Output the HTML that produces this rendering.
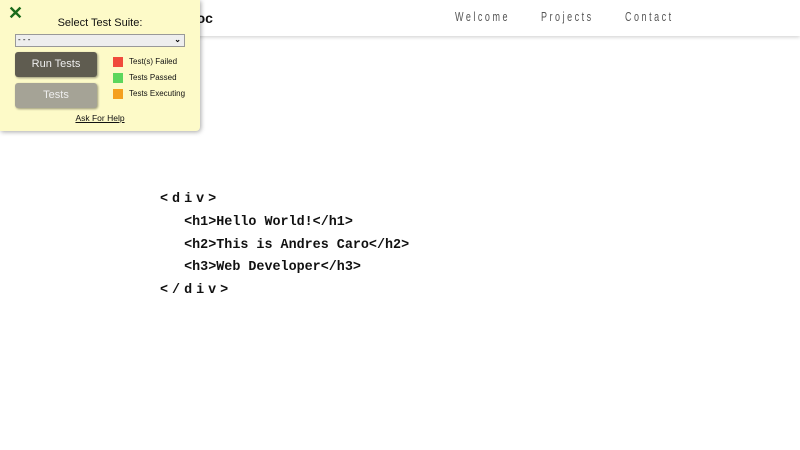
<!DOCTYPE html>
<html><head><meta charset="utf-8"><style>
body{margin:0;width:800px;height:450px;background:#fff;position:relative;overflow:hidden;font-family:"Liberation Sans",sans-serif}
.hdr{position:absolute;left:0;top:0;width:800px;height:36px;background:#fff;box-shadow:0 1px 4px rgba(0,0,0,.2)}
.logo{position:absolute;left:116px;top:10px;font-size:14px;font-weight:bold;color:#111}
.nav{position:absolute;top:10px;font-size:12.5px;color:#555;letter-spacing:3.5px;transform:scaleX(0.72);transform-origin:0 0}
.panel{position:absolute;left:0;top:0;width:200px;height:131px;background:#fdfac8;box-shadow:1px 1px 5px rgba(0,0,0,.35);border-radius:0 0 4px 0}
.x{position:absolute;left:8px;top:3px;font-size:18px;font-weight:bold;color:#1a6a1a}
.lbl{position:absolute;left:0;width:200px;top:17px;text-align:center;font-size:11px;color:#111}
.sel{position:absolute;left:15px;top:34px;width:166px;height:11px;border:1px solid #999;background:#eee;font-size:8px;line-height:10px;padding-left:2px;box-sizing:content-box}
.btn{position:absolute;left:15px;width:82px;height:25px;border-radius:3px;box-shadow:1px 1px 2px rgba(0,0,0,.4);color:#eee;font-size:11px;text-align:center;line-height:25px}
.lg{position:absolute;left:113px;font-size:8px;color:#111}
.lg i{display:inline-block;width:10px;height:10px;vertical-align:middle;margin-right:6px}
.help{position:absolute;left:0;width:200px;top:113px;text-align:center;font-size:8.5px;text-decoration:underline;color:#111}
.code{position:absolute;left:160px;top:189px;font-family:"Liberation Mono",monospace;font-weight:bold;font-size:13.4px;line-height:22.8px;color:#111}
.code div{white-space:pre}
.sp{letter-spacing:4px}
</style></head><body>
<div class="hdr">
<div class="logo"><span style="color:#ccc">@andrescar</span>oc</div>
<div class="nav" style="left:455px">Welcome</div>
<div class="nav" style="left:541px">Projects</div>
<div class="nav" style="left:625px">Contact</div>
</div>
<div class="panel">
<div class="x">✕</div>
<div class="lbl">Select Test Suite:</div>
<div class="sel">- - -<span style="position:absolute;right:3px;font-weight:bold">⌄</span></div>
<div class="btn" style="top:52px;background:#5f5c50">Run Tests</div>
<div class="btn" style="top:83px;background:#a5a396">Tests</div>
<div class="lg" style="top:57px"><i style="background:#f04a3c"></i>Test(s) Failed</div>
<div class="lg" style="top:73px"><i style="background:#5cd65c"></i>Tests Passed</div>
<div class="lg" style="top:89px"><i style="background:#f4a020"></i>Tests Executing</div>
<div class="help">Ask For Help</div>
</div>
<div class="code">
<div class="sp">&lt;div&gt;</div>
<div>   &lt;h1&gt;Hello World!&lt;/h1&gt;</div>
<div>   &lt;h2&gt;This is Andres Caro&lt;/h2&gt;</div>
<div>   &lt;h3&gt;Web Developer&lt;/h3&gt;</div>
<div class="sp">&lt;/div&gt;</div>
</div>
</body></html>
